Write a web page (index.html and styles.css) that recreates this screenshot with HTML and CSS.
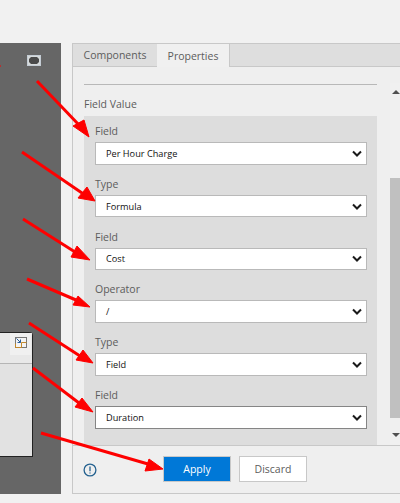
FILE: index.html
```html
<!DOCTYPE html>
<html lang="en">

<head>
    <meta charset="UTF-8">
    <meta name="viewport" content="width=device-width, initial-scale=1.0">
    <title>Properties</title>
    <link rel="stylesheet" href="styles.css">
</head>

<body>
    <div class="page">
        <div class="canvas">
            <div class="canvas-top">
                <svg class="shape-icon" width="14" height="11" viewBox="0 0 14 11">
                    <rect x="0.5" y="0.5" width="13" height="10" fill="#d6dadb" stroke="#c4ccd4"/>
                    <path d="M4 2h6l2 2v3l-2 2H4L2 7V4Z" fill="#4a4a4a"/>
                </svg>
            </div>
            <div class="mini-window">
                <div class="mini-title">
                    <div class="mini-icon">
                        <svg width="12" height="11" viewBox="0 0 12 11">
                            <rect x="0.5" y="0.5" width="11" height="10" fill="#f4f4f4" stroke="#777"/>
                            <path d="M6.5 5.5v5M6.5 5.5h5M.5 6.5v4h6" stroke="#c58a2c" fill="none"/>
                            <path d="M1.5 1.5l4 4M5.5 2.5v3h-3" stroke="#2a5f9e" fill="none"/>
                        </svg>
                    </div>
                </div>
                <div class="mini-body"></div>
            </div>
        </div>

        <div class="panel">
            <div class="tabs">
                <div class="tab">Components</div>
                <div class="tab active">Properties</div>
            </div>

            <div class="scroll-area">
                <div class="content">
                    <div class="rule"></div>
                    <div class="group-title">Field Value</div>
                    <div class="field-group">
                        <label class="field-label">Field</label>
                        <div class="select">Per Hour Charge
                            <svg class="chevron" width="10" height="7" viewBox="0 0 10 7"><path d="M1 1.5l4 4 4-4" fill="none" stroke="#1a1a1a" stroke-width="2"/></svg>
                        </div>
                        <label class="field-label">Type</label>
                        <div class="select">Formula
                            <svg class="chevron" width="10" height="7" viewBox="0 0 10 7"><path d="M1 1.5l4 4 4-4" fill="none" stroke="#1a1a1a" stroke-width="2"/></svg>
                        </div>
                        <label class="field-label">Field</label>
                        <div class="select">Cost
                            <svg class="chevron" width="10" height="7" viewBox="0 0 10 7"><path d="M1 1.5l4 4 4-4" fill="none" stroke="#1a1a1a" stroke-width="2"/></svg>
                        </div>
                        <label class="field-label">Operator</label>
                        <div class="select">/
                            <svg class="chevron" width="10" height="7" viewBox="0 0 10 7"><path d="M1 1.5l4 4 4-4" fill="none" stroke="#1a1a1a" stroke-width="2"/></svg>
                        </div>
                        <label class="field-label">Type</label>
                        <div class="select">Field
                            <svg class="chevron" width="10" height="7" viewBox="0 0 10 7"><path d="M1 1.5l4 4 4-4" fill="none" stroke="#1a1a1a" stroke-width="2"/></svg>
                        </div>
                        <label class="field-label">Field</label>
                        <div class="select focused">Duration
                            <svg class="chevron" width="10" height="7" viewBox="0 0 10 7"><path d="M1 1.5l4 4 4-4" fill="none" stroke="#1a1a1a" stroke-width="2"/></svg>
                        </div>
                    </div>
                </div>
                <div class="scrollbar">
                    <div class="arrow-up"></div>
                    <div class="track"><div class="thumb"></div></div>
                    <div class="arrow-down"></div>
                </div>
            </div>

            <div class="footer">
                <svg class="info" width="14" height="14" viewBox="0 0 14 14">
                    <circle cx="7" cy="7" r="5.9" fill="none" stroke="#24618f" stroke-width="1.3"/>
                    <path d="M7 3.6v4.6M7 9.4v1.2" stroke="#24618f" stroke-width="1.3"/>
                </svg>
                <button class="btn primary">Apply</button>
                <button class="btn">Discard</button>
            </div>
        </div>

        <!-- callout arrows pasted over the screenshot -->
        <svg class="callouts" width="400" height="503" viewBox="0 0 400 503">
            <g stroke="#fe0000" stroke-width="3" fill="#fe0000">
                <path d="M0 66h1" stroke-width="1"/>
                <path d="M37 81L80 126"/><path d="M89 137L73 126L84 120Z" stroke-width="1"/>
                <path d="M22 152L82 193"/><path d="M95 201L78 198L87 187Z" stroke-width="1"/>
                <path d="M23 219L75 252"/><path d="M90 260L71 257L77 246Z" stroke-width="1"/>
                <path d="M27 279L76 300"/><path d="M90 307L73 305L78 296Z" stroke-width="1"/>
                <path d="M29 323L80 356"/><path d="M93 363L76 360L83 350Z" stroke-width="1"/>
                <path d="M33 368L79 403"/><path d="M93 412L75 407L82 398Z" stroke-width="1"/>
                <path d="M41 433L148 464"/><path d="M163 469L145 471L149 459Z" stroke-width="1"/>
            </g>
        </svg>
    </div>
</body>

</html>
```

FILE: styles.css
```css
* {
    box-sizing: border-box;
}

body {
    margin: 0;
    background-color: #f1f1f1;
    color: #5c5c5c;
    font-family: "Open Sans", "Noto Sans", sans-serif;
    font-size: 10.5px;
}

.page {
    position: relative;
    display: flex;
    width: 400px;
    height: 503px;
    padding-top: 43px;
    overflow: hidden;
}

/* left canvas */
.canvas {
    display: flex;
    flex-direction: column;
    width: 61px;
    height: 451px;
    margin-right: 11px;
    background-color: #666666;
}

.canvas-top {
    display: flex;
    justify-content: flex-end;
    height: 289px;
    padding: 12px 20px 0 0;
}

.shape-icon {
    display: block;
}

.mini-window {
    width: 33px;
    height: 125px;
    border: 1px solid #222222;
    border-left: none;
    border-radius: 0 4px 0 0;
    background-color: #e2e2e2;
}

.mini-title {
    display: flex;
    justify-content: flex-end;
    height: 31px;
    border-bottom: 1px solid #b5b5b5;
    background-color: #e8e8e8;
}

.mini-icon {
    display: flex;
    justify-content: center;
    width: 21px;
    height: 22px;
    margin-right: 1px;
    padding-top: 4px;
    background-color: #f0f0f0;
}

.mini-body {
    height: 91px;
}

/* right panel */
.panel {
    display: flex;
    flex-direction: column;
    flex: 1;
    height: 451px;
    border: 1px solid #c8c8c8;
    border-right: none;
    background-color: #efefef;
}

.tabs {
    display: flex;
    height: 23px;
    border-bottom: 1px solid #c8c8c8;
    background-color: #dedede;
}

.tab {
    display: flex;
    align-items: center;
    justify-content: center;
    width: 84px;
    height: 22px;
    font-size: 10.5px;
}

.tab.active {
    width: 73px;
    height: 23px;
    border-right: 1px solid #c8c8c8;
    background-color: #f0f0f0;
}

.scroll-area {
    display: flex;
    flex: 1;
    min-height: 0;
    border-bottom: 1px solid #c8c8c8;
}

.content {
    width: 317px;
    padding: 0 0 0 11px;
}

.rule {
    width: 293px;
    height: 18px;
    border-bottom: 1px solid #b8b8b8;
}

.group-title {
    height: 31px;
    padding-top: 11px;
    font-size: 10.5px;
    line-height: 16px;
}

.field-group {
    width: 293px;
    height: 329px;
    padding: 7px 10px 0 11px;
    background-color: #dddddd;
}

.field-label {
    display: block;
    height: 19px;
    font-size: 10.5px;
    line-height: 17px;
}

.select {
    display: flex;
    align-items: center;
    justify-content: space-between;
    height: 22.6px;
    margin-bottom: 11.2px;
    padding: 0 4px 0 10px;
    border: 1px solid #b9b9b9;
    background-color: #ffffff;
    color: #111111;
    font-size: 9.2px;
}

.select.focused {
    border-color: #858585;
}

.chevron {
    display: block;
}

.scrollbar {
    display: flex;
    flex-direction: column;
    width: 10px;
    margin: 16px 0 0 auto;
    background-color: #f0f0f0;
}

.arrow-up,
.arrow-down {
    width: 0;
    height: 0;
    margin: 7px 0 6px 2px;
    border-left: 4px solid transparent;
    border-right: 4px solid transparent;
}

.arrow-up {
    border-bottom: 4px solid #505050;
}

.arrow-down {
    margin: 6px 0 8px 2px;
    border-top: 4px solid #505050;
}

.track {
    flex: 1;
    padding-top: 78px;
    padding-bottom: 9px;
}

.thumb {
    height: 100%;
    background-color: #c0c0c0;
}

.footer {
    display: flex;
    align-items: flex-start;
    gap: 8px;
    height: 47px;
    padding: 10px 0 0 10px;
}

.info {
    margin: 7px 58px 0 0;
}

.btn {
    width: 68px;
    height: 26px;
    padding: 0;
    border: 1px solid #c8c8c8;
    background-color: #ffffff;
    color: #5c5c5c;
    font-family: inherit;
    font-size: 10.5px;
}

.btn.primary {
    border-color: #c8c8c8;
    background-color: #0078d7;
    color: #ffffff;
}

/* overlay */
.callouts {
    position: absolute;
    top: 0;
    left: 0;
}
```
